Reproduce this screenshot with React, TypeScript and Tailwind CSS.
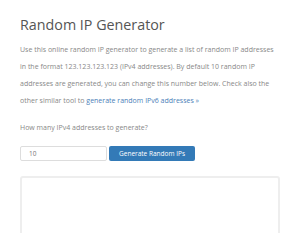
import React, { useState } from 'react'

export default function App() {
  const [count, setCount] = useState('10')

  return (
    <div className="w-[300px] h-[233px] overflow-hidden bg-white px-[20px] pt-[15px] font-['Open_Sans',sans-serif]">
      <h1 className="text-[14.3px] leading-[20px] text-[#555] font-normal">Random IP Generator</h1>

      <p className="mt-[6px] text-[7px] leading-[17px] text-[#888]">
        Use this online random IP generator to generate a list of random IP addresses in the format 123.123.123.123 (IPv4 addresses). By default 10 random IP addresses are generated, you can change this number below. Check also the other similar tool to{' '}
        <a href="#" className="text-[#4a80b8]">generate random IPv6 addresses »</a>
      </p>

      <p className="mt-[10px] text-[7px] leading-[17px] text-[#888]">How many IPv4 addresses to generate?</p>

      <div className="mt-[10px] flex gap-[2px]">
        <input
          value={count}
          onChange={(e) => setCount(e.target.value)}
          className="w-[87px] h-[15px] border border-[#ddd] rounded-[2px] px-[8px] text-[6.5px] text-[#777] outline-none"
        />
        <button className="w-[86px] h-[15px] bg-[#337ab7] rounded-[2px] text-white text-[6.5px] font-medium">
          Generate Random IPs
        </button>
      </div>

      <textarea className="mt-[15px] block w-[260px] h-[80px] border-2 border-[#eee] rounded-[3px] resize-none outline-none" />
    </div>
  )
}
